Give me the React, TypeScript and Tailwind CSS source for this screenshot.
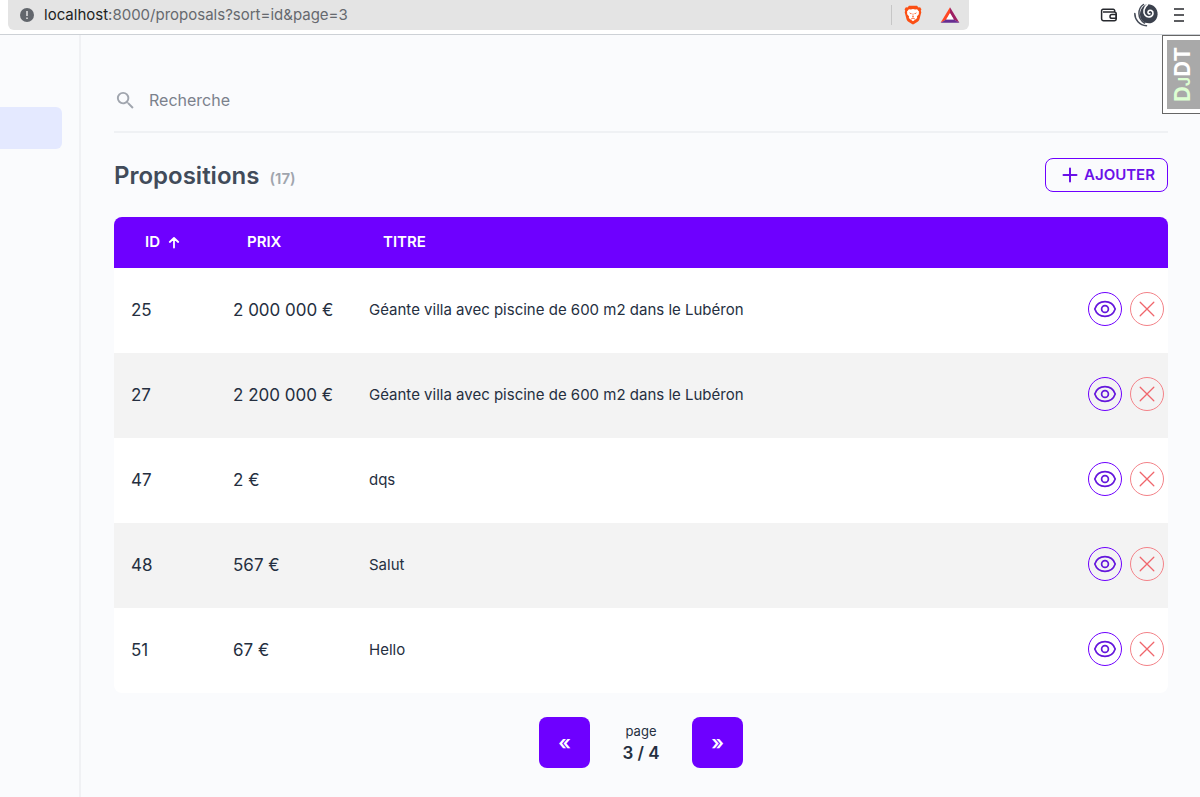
import React from 'react';
import { MdSearch } from 'react-icons/md';

interface Proposal {
  id: number;
  price: string;
  title: string;
}

const proposals: Proposal[] = [
  { id: 25, price: '2 000 000 €', title: 'Géante villa avec piscine de 600 m2 dans le Lubéron' },
  { id: 27, price: '2 200 000 €', title: 'Géante villa avec piscine de 600 m2 dans le Lubéron' },
  { id: 47, price: '2 €', title: 'dqs' },
  { id: 48, price: '567 €', title: 'Salut' },
  { id: 51, price: '67 €', title: 'Hello' },
];

const BraveIcon = () => (
  <svg viewBox="0 0 18 20" className="h-5 w-[18px]" aria-hidden="true">
    <path d="M5 .8h8l1.5 1.6 1.6-.1 1.3 1.9-.6 1.5.5 1.6-1.9 7.3c-.2.8-.7 1.5-1.4 2L10 19.1c-.6.5-1.4.5-2 0l-4-2.5c-.7-.5-1.2-1.2-1.4-2L.7 7.3l.5-1.6-.6-1.5 1.3-1.9 1.6.1z" fill="#fb4f14" />
    <path d="M4.9 4.2l2 .3L9 4l2.1.5 2-.3 2 2.6-.4 1.1.3 1.2-2.1 2.5.3 1.5-1.8 1.3L9 16.3l-2.4-1.9-1.8-1.3.3-1.5L3 9.1l.3-1.2-.4-1.1z" fill="#fff" />
    <path d="M4.8 7.5l2.8.7-.4 1.1zM13.2 7.5l-2.8.7.4 1.1zM8.6 8.5h.8l-.2 2.5.8.8-1 .7-1-.7.8-.8z" fill="#fb4f14" />
    <path d="M7 14.1l2-1 2 1" fill="none" stroke="#fb4f14" strokeWidth=".8" />
  </svg>
);

const BatIcon = () => (
  <svg viewBox="0 0 20 17" className="h-[17px] w-5" aria-hidden="true">
    <path d="M10 .2L.6 15.7l6-3.3L10 6.400z" fill="#ff4724" />
    <path d="M10 .2l9.4 15.5-6-3.300L10 6.400z" fill="#9e1f63" />
    <path d="M.6 15.700h18.800l-6-3.500H6.600z" fill="#662d91" />
    <path d="M10 5.900l3.900 6.500H6.100z" fill="#fff" />
  </svg>
);

const WalletIcon = () => (
  <svg viewBox="0 0 18 16" className="h-4 w-[18px]" fill="none" stroke="#27292e" strokeWidth="1.5" aria-hidden="true">
    <path d="M14.7 4.800V3.800a1.500 1.500 0 0 0-1.500-1.500H3a1.400 1.400 0 0 0-1.400 1.400v8a2 2 0 0 0 2 2h10.600a2 2 0 0 0 2-2V7a2 2 0 0 0-2-2H3" />
    <path d="M16.200 7.500h-4.300a1.900 1.900 0 0 0 0 3.800h4.300z" />
  </svg>
);

const ProfileIcon = () => (
  <svg viewBox="0 0 24 24" className="size-6" aria-hidden="true">
    <path d="M12 1.500C17 0 24 4 23.600 11.500 23.300 17 19 20.300 15 20.300 9.500 20.300 6 16.500 6 11.500 6 7 8.500 3 12 1.500z" fill="#3b414d" />
    <path d="M13.500 1.500C9.500 4.500 9 9.500 11.200 12.300c2.300 2.800 7.300 2 7.800-1.600.4-3-3.200-4.500-4.700-2.400-.9 1.400.2 2.900 1.600 2.500" fill="none" stroke="#fff" strokeWidth="1.600" strokeLinecap="round" />
    <path d="M9.500 1.500C3.500 5.500 3 15.500 10.500 20" fill="none" stroke="#454b57" strokeWidth="1.500" strokeLinecap="round" />
    <path d="M.8 10.500c0 6 4.500 11.800 11.700 12.200" fill="none" stroke="#454b57" strokeWidth="1.500" strokeLinecap="round" />
  </svg>
);

const EyeIcon = () => (
  <svg viewBox="0 0 24 24" className="size-6" fill="none" stroke="currentColor" strokeWidth="1.7" aria-hidden="true">
    <path d="M1.8 12C3.5 7 7.5 4.7 12 4.7S20.5 7 22.2 12C20.5 17 16.5 19.3 12 19.3S3.5 17 1.8 12z" />
    <circle cx="12" cy="12" r="3.4" />
  </svg>
);

const CrossIcon = () => (
  <svg viewBox="0 0 24 24" className="size-6" fill="none" stroke="currentColor" strokeWidth="1.3" strokeLinecap="round" aria-hidden="true">
    <path d="M5.2 5.2l13.6 13.6M18.8 5.2L5.2 18.8" />
  </svg>
);

const BrowserBar = () => (
  <div className="flex h-[35px] items-start border-b border-[#cdd1d6] bg-white pr-[14px] pl-2">
    <div className="flex h-[30px] flex-1 items-center rounded-b-md bg-[#e4e4e4] pr-[9px] pl-3">
      <svg viewBox="0 0 14 14" className="mr-[10px] size-[14px]" aria-hidden="true">
        <circle cx="7" cy="7" r="7" fill="#62666c" />
        <path d="M7 3v5M7 9.5v1.5" stroke="#e4e4e4" strokeWidth="1.5" />
      </svg>
      <span className="flex-1 text-[15px] text-[#66696e]">
        <span className="text-[#1d1f22]">localhost</span>:8000/proposals?sort=id&amp;page=3
      </span>
      <div className="flex items-center gap-[18px] border-l border-[#c6c6c6] pl-3">
        <button type="button" aria-label="Brave Shields"><BraveIcon /></button>
        <button type="button" aria-label="Brave Rewards"><BatIcon /></button>
      </div>
    </div>
    <div className="ml-[131px] flex h-[30px] items-center gap-4">
      <button type="button" aria-label="Wallet"><WalletIcon /></button>
      <button type="button" aria-label="Profile"><ProfileIcon /></button>
      <button type="button" aria-label="Menu">
        <svg viewBox="0 0 12 16" className="h-4 w-3" stroke="#27292e" strokeWidth="1.5" aria-hidden="true">
          <path d="M0 2h10M0 8h10M0 14h10" />
        </svg>
      </button>
    </div>
  </div>
);

const ProposalsTable = () => (
  <table className="w-full table-fixed border-separate border-spacing-0 overflow-hidden rounded-lg bg-white text-left">
    <thead className="bg-[#6e00ff] text-[15px] text-white">
      <tr className="h-[51px]">
        <th className="w-[102px] pl-[31px] font-semibold">
          <button type="button" className="flex items-center gap-2">
            ID
            <svg viewBox="0 0 12 12" className="size-3" fill="none" stroke="currentColor" strokeWidth="1.8" strokeLinecap="round" strokeLinejoin="round" aria-hidden="true">
              <path d="M6 10.5V1.2M1.8 5L6 1l4.2 4" />
            </svg>
          </button>
        </th>
        <th className="w-[136px] pl-[31px] font-semibold">PRIX</th>
        <th className="pl-[31px] font-semibold">TITRE</th>
        <th className="w-[120px]" aria-label="Actions" />
      </tr>
    </thead>
    <tbody>
      {proposals.map((p) => (
        <tr key={p.id} className="h-[85px] even:bg-[#f3f3f3]">
          <td className="pl-[17px] text-[17px]">{p.id}</td>
          <td className="pl-[17px] text-[17px] whitespace-nowrap">{p.price}</td>
          <td className="pl-[17px] text-[15px]">{p.title}</td>
          <td className="pr-1 pb-1">
            <div className="flex justify-end gap-2">
              <a href={`#${p.id}`} aria-label="Voir" className="flex size-[34px] items-center justify-center rounded-full border border-[#6e00ff] text-[#6416dc]">
                <EyeIcon />
              </a>
              <button type="button" aria-label="Supprimer" className="flex size-[34px] items-center justify-center rounded-full border border-[#f38288] text-[#f0666c]">
                <CrossIcon />
              </button>
            </div>
          </td>
        </tr>
      ))}
    </tbody>
  </table>
);

const Pagination = () => (
  <nav className="mt-6 flex items-center justify-center" aria-label="Pagination">
    <button type="button" aria-label="Page précédente" className="size-[51px] rounded-lg bg-[#6e00ff] text-xl font-semibold text-white">«</button>
    <div className="w-[102px] text-center">
      <div className="text-[13px] leading-5">page</div>
      <div className="text-[17px] leading-6 font-semibold">3 / 4</div>
    </div>
    <button type="button" aria-label="Page suivante" className="size-[51px] rounded-lg bg-[#6e00ff] text-xl font-semibold text-white">»</button>
  </nav>
);

const App: React.FC = () => {
  return (
    <div className="flex min-h-screen flex-col bg-[#fafbfd] font-['Inter',sans-serif] text-[#252f3f]">
      <BrowserBar />
      <div className="relative flex flex-1">
        <aside className="w-[81px] shrink-0 border-r-2 border-[#f0f1f4] pt-[72px] pr-[17px]">
          <a href="#proposals" aria-label="Propositions" className="block h-[42px] rounded-r-md bg-[#e4e9ff]" />
        </aside>

        <main className="flex-1 pt-[34px] pr-8 pl-[33px]">
          <label className="flex h-16 items-center gap-3 border-b-2 border-[#eff1f4]">
            <MdSearch className="size-[23px] text-[#a0a5ae]" />
            <input type="search" placeholder="Recherche" aria-label="Recherche" className="flex-1 bg-transparent text-base outline-none placeholder:text-[#7b818c]" />
          </label>

          <div className="my-[25px] flex items-end justify-between">
            <h1 className="text-2xl font-semibold text-[#414b5a]">
              Propositions <span className="ml-1 text-[15px] text-[#a0a5ae]">(17)</span>
            </h1>
            <button type="button" className="flex h-[34px] items-center gap-[6px] rounded-lg border border-[#6e00ff] px-3 text-[15px] font-semibold text-[#6a11e8]">
              <svg viewBox="0 0 16 16" className="ml-1 size-4" stroke="currentColor" strokeWidth="2" strokeLinecap="round" aria-hidden="true">
                <path d="M8 1.5v13M1.5 8h13" />
              </svg>
              AJOUTER
            </button>
          </div>

          <ProposalsTable />
          <Pagination />
        </main>

        {/* Django debug toolbar handle */}
        <button type="button" aria-label="DJDT" className="absolute top-0 right-0 h-[79px] w-[38px] border border-r-0 border-[#666] bg-white py-1 pl-1">
          <span className="flex h-full items-center justify-center bg-[#a9a9a9] text-[22px] leading-none font-bold text-white">
            <span className="-rotate-90 whitespace-nowrap">
              <span className="text-[#ddffd2]">D<span className="text-base">J</span></span>DT
            </span>
          </span>
        </button>
      </div>
    </div>
  );
};

export default App;
